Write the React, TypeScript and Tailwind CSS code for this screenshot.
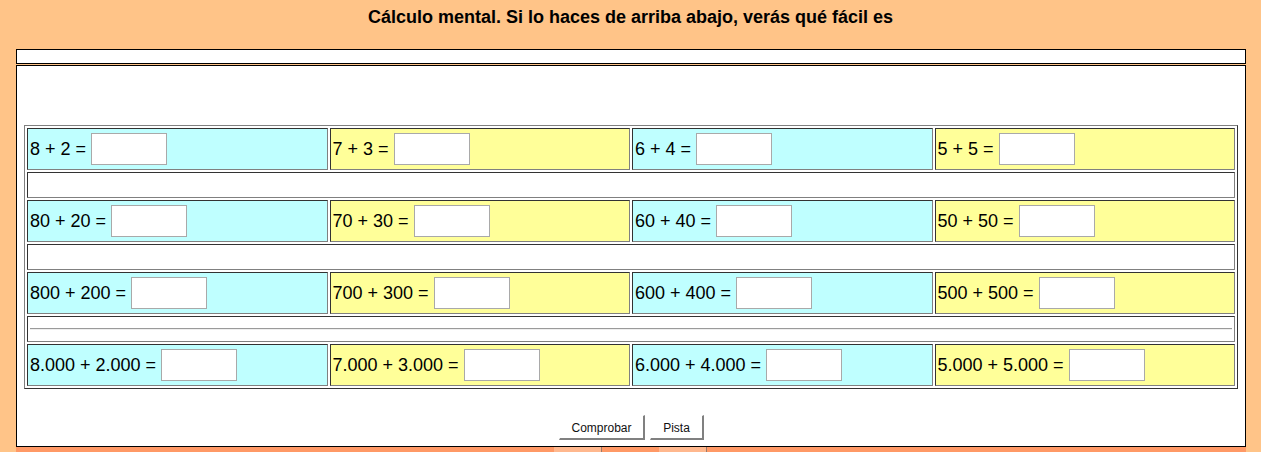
import React from "react";

const rows: string[][] = [
  ["8 + 2 =", "7 + 3 =", "6 + 4 =", "5 + 5 ="],
  ["80 + 20 =", "70 + 30 =", "60 + 40 =", "50 + 50 ="],
  ["800 + 200 =", "700 + 300 =", "600 + 400 =", "500 + 500 ="],
  ["8.000 + 2.000 =", "7.000 + 3.000 =", "6.000 + 4.000 =", "5.000 + 5.000 ="],
];

function Cell({ label, yellow }: { label: string; yellow: boolean }) {
  return (
    <div
      className={`h-[42px] flex items-center pl-[2px] border border-t-[#333333] border-l-[#333333] border-r-[#808080] border-b-[#808080] ${
        yellow ? "bg-[#FFFF99]" : "bg-[#BFFFFF]"
      }`}
    >
      <span className="whitespace-pre text-[18px] leading-[20px] text-black">{label + " "}</span>
      <input
        type="text"
        className="w-[76px] h-[32px] bg-white border border-[#a9a9a9] outline-none"
      />
    </div>
  );
}

function Spacer({ hr }: { hr?: boolean }) {
  return (
    <div className="col-span-4 h-[26px] bg-white border border-t-[#333333] border-l-[#333333] border-r-[#808080] border-b-[#808080] flex items-center">
      {hr && <div className="mx-[2px] w-full h-[2px] border-t border-t-[#9a9a9a] border-b border-b-[#eeeeee]" />}
    </div>
  );
}

export default function App() {
  return (
    <div
      className="w-[1261px] h-[452px] overflow-hidden bg-[#FFC488]"
      style={{ fontFamily: '"Liberation Sans", Arial, sans-serif' }}
    >
      <div className="h-[49px] pt-[6px] text-center text-[18px] leading-[22px] font-bold text-black">
        Cálculo mental. Si lo haces de arriba abajo, verás qué fácil es
      </div>
      <div className="ml-[16px] w-[1230px] h-[15px] bg-white border border-black" />
      <div className="ml-[16px] mt-[1px] w-[1230px] h-[382px] bg-white border border-black pt-[59px] px-[7px]">
        <div className="grid grid-cols-4 gap-[2px] p-[2px] border border-t-[#808080] border-l-[#808080] border-r-[#333333] border-b-[#333333]">
          {rows.map((r, i) => (
            <React.Fragment key={i}>
              {r.map((label, j) => (
                <Cell key={j} label={label} yellow={j % 2 === 1} />
              ))}
              {i < 3 && <Spacer hr={i === 2} />}
            </React.Fragment>
          ))}
        </div>
        <div className="mt-[26px] flex justify-center gap-[5px] pl-[1px]">
          <button className="w-[86px] h-[25px] bg-white text-[12px] text-[#111] border-t border-l border-t-white border-l-white border-r-2 border-b-2 border-r-[#808080] border-b-[#808080] pt-[1px]">
            Comprobar
          </button>
          <button className="w-[54px] h-[25px] bg-white text-[12px] text-[#111] border-t border-l border-t-white border-l-white border-r-2 border-b-2 border-r-[#808080] border-b-[#808080] pt-[1px]">
            Pista
          </button>
        </div>
      </div>
      <div className="ml-[16px] w-[1230px] h-[5px] bg-[#FF9966] flex">
        <div className="ml-[538px] w-[48px] h-[5px] bg-[#FFB88E] border-r border-r-[#9a7a6a]" />
        <div className="ml-[57px] w-[48px] h-[5px] bg-[#FFB88E] border-r border-r-[#9a7a6a]" />
      </div>
    </div>
  );
}
